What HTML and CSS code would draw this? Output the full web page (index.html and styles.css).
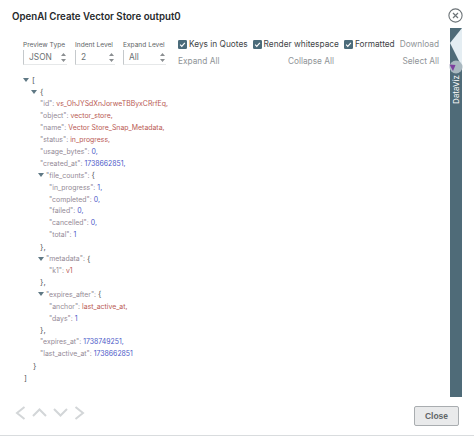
FILE: index.html
```html
<!DOCTYPE html>
<html lang="en">
<head>
  <meta charset="UTF-8">
  <title>OpenAI Create Vector Store output0</title>
  <link rel="stylesheet" href="styles.css">
</head>
<body>
  <div class="dialog">
    <h1 class="title">OpenAI Create Vector Store output0</h1>

    <div class="toolbar">
      <div class="selects">
        <div class="field type">
          <label>Preview Type</label>
          <div class="select"><span>JSON</span><svg width="5" height="11" viewBox="0 0 5 11"><path d="M2.5 1 L5 4 H0 Z M2.5 10 L0 7 H5 Z" fill="#8b8f92"/></svg></div>
        </div>
        <div class="field indent">
          <label>Indent Level</label>
          <div class="select"><span>2</span><svg width="5" height="11" viewBox="0 0 5 11"><path d="M2.5 1 L5 4 H0 Z M2.5 10 L0 7 H5 Z" fill="#8b8f92"/></svg></div>
        </div>
        <div class="field expand">
          <label>Expand Level</label>
          <div class="select"><span>All</span><svg width="5" height="11" viewBox="0 0 5 11"><path d="M2.5 1 L5 4 H0 Z M2.5 10 L0 7 H5 Z" fill="#8b8f92"/></svg></div>
        </div>
      </div>
      <div class="options">
        <div class="checks">
          <span class="check"><svg class="box" width="9" height="9" viewBox="0 0 10 10"><rect width="10" height="10" rx="1.5" fill="#4b6b7a"/><path d="M2.4 5.2 L4.2 7 L7.6 3.3" fill="none" stroke="#fff" stroke-width="1.3"/></svg>Keys in Quotes</span>
          <span class="check"><svg class="box" width="9" height="9" viewBox="0 0 10 10"><rect width="10" height="10" rx="1.5" fill="#4b6b7a"/><path d="M2.4 5.2 L4.2 7 L7.6 3.3" fill="none" stroke="#fff" stroke-width="1.3"/></svg>Render whitespace</span>
          <span class="check"><svg class="box" width="9" height="9" viewBox="0 0 10 10"><rect width="10" height="10" rx="1.5" fill="#4b6b7a"/><path d="M2.4 5.2 L4.2 7 L7.6 3.3" fill="none" stroke="#fff" stroke-width="1.3"/></svg>Formatted</span>
          <span class="link">Download</span>
        </div>
        <div class="actions">
          <span class="link">Expand All</span>
          <span class="link">Collapse All</span>
          <span class="link">Select All</span>
        </div>
      </div>
    </div>

    <div class="tree">
      <div class="row lvl0"><i class="arrow"></i><b>[</b></div>
      <div class="row lvl1"><i class="arrow"></i><b>{</b></div>
      <div class="row lvl2"><span class="key">"id":</span> <span class="str">vs_OhJYSdXnJorweTBByxCRrfEq,</span></div>
      <div class="row lvl2"><span class="key">"object":</span> <span class="str">vector_store,</span></div>
      <div class="row lvl2"><span class="key">"name":</span> <span class="str">Vector Store_Snap_Metadata,</span></div>
      <div class="row lvl2"><span class="key">"status":</span> <span class="str">in_progress,</span></div>
      <div class="row lvl2"><span class="key">"usage_bytes":</span> <span class="num">0,</span></div>
      <div class="row lvl2"><span class="key">"created_at":</span> <span class="num">1738662851,</span></div>
      <div class="row open"><i class="arrow"></i><span class="key">"file_counts":</span> <b>{</b></div>
      <div class="row lvl3"><span class="key">"in_progress":</span> <span class="num">1,</span></div>
      <div class="row lvl3"><span class="key">"completed":</span> <span class="num">0,</span></div>
      <div class="row lvl3"><span class="key">"failed":</span> <span class="num">0,</span></div>
      <div class="row lvl3"><span class="key">"cancelled":</span> <span class="num">0,</span></div>
      <div class="row lvl3"><span class="key">"total":</span> <span class="num">1</span></div>
      <div class="row lvl2"><b>},</b></div>
      <div class="row open"><i class="arrow"></i><span class="key">"metadata":</span> <b>{</b></div>
      <div class="row lvl3"><span class="key">"k1":</span> <span class="str">v1</span></div>
      <div class="row lvl2"><b>},</b></div>
      <div class="row open"><i class="arrow"></i><span class="key">"expires_after":</span> <b>{</b></div>
      <div class="row lvl3"><span class="key">"anchor":</span> <span class="str">last_active_at,</span></div>
      <div class="row lvl3"><span class="key">"days":</span> <span class="num">1</span></div>
      <div class="row lvl2"><b>},</b></div>
      <div class="row lvl2"><span class="key">"expires_at":</span> <span class="num">1738749251,</span></div>
      <div class="row lvl2"><span class="key">"last_active_at":</span> <span class="num">1738662851</span></div>
      <div class="row end1"><b>}</b></div>
      <div class="row end0"><b>]</b></div>
    </div>

    <div class="footer">
      <div class="pager">
        <svg width="11" height="14" viewBox="0 0 11 14"><path d="M9.5 1 L2 7 L9.5 13" fill="none" stroke="#d3d6d8" stroke-width="2"/></svg>
        <svg width="15" height="9" viewBox="0 0 15 9"><path d="M1 8 L7.5 1.5 L14 8" fill="none" stroke="#d3d6d8" stroke-width="2"/></svg>
        <svg width="15" height="9" viewBox="0 0 15 9"><path d="M1 1 L7.5 7.5 L14 1" fill="none" stroke="#d3d6d8" stroke-width="2"/></svg>
        <svg width="11" height="14" viewBox="0 0 11 14"><path d="M1.5 1 L9 7 L1.5 13" fill="none" stroke="#d3d6d8" stroke-width="2"/></svg>
      </div>
      <button class="close-btn">Close</button>
    </div>

    <svg class="close-x" width="15" height="15" viewBox="0 0 15 15"><circle cx="7.5" cy="7.5" r="6.6" fill="none" stroke="#6d7478" stroke-width="1.1"/><path d="M5 5 L10 10 M10 5 L5 10" stroke="#6d7478" stroke-width="1.2"/></svg>

    <div class="dataviz">
      <svg class="notch" width="12" height="42" viewBox="0 0 12 42"><path d="M12 0 L0 15 L12 39 Z" fill="#e4edf2"/></svg>
      <svg class="knob" width="14" height="14" viewBox="0 0 14 14"><circle cx="7" cy="7" r="6.5" fill="#a9b8c0"/><path d="M0.5 4.5 L6.5 5 L4 11 Z" fill="#7d3f9e"/></svg>
      <span class="dataviz-label">DataViz</span>
    </div>
  </div>
</body>
</html>
```
FILE: styles.css
```css
body {
  margin: 0;
  background: #fff;
  font-family: Inter, "Noto Sans", sans-serif;
  color: #3f4548;
}
.dialog {
  position: relative;
  width: 474px;
  height: 436px;
  box-sizing: border-box;
  padding: 10px 15px 0 12px;
  overflow: hidden;
  border-bottom: 1px solid #d9dcde;
}
.title {
  margin: 0;
  font-size: 9.7px;
  line-height: 13px;
  font-weight: 600;
  color: #26292b;
}
.toolbar {
  display: flex;
  margin-top: 18px;
  padding-left: 11px;
  gap: 12px;
}
.selects {
  display: flex;
  gap: 8px;
}
.type { width: 44px; }
.indent { width: 40px; }
.expand { width: 43px; }
.field label {
  display: block;
  font-size: 6.6px;
  line-height: 9px;
  white-space: nowrap;
  color: #5d6366;
}
.select {
  display: flex;
  justify-content: space-between;
  align-items: center;
  height: 14px;
  padding: 0 1px 0 5px;
  border-left: 1px solid #c5c9cc;
  border-bottom: 1px solid #e6e8e9;
  font-size: 8.4px;
  color: #6a7073;
}
.options {
  width: 261px;
  margin-top: -3px;
}
.checks {
  display: flex;
  align-items: center;
  justify-content: space-between;
  height: 12px;
  font-size: 8.3px;
}
.check {
  display: flex;
  align-items: center;
  gap: 2px;
  white-space: nowrap;
}
.link {
  color: #8f9497;
  font-size: 8.3px;
}
.actions {
  display: flex;
  justify-content: space-between;
  margin-top: 5px;
  line-height: 12px;
}
.tree {
  margin-top: 7px;
  font-size: 6.9px;
  color: #555b5e;
}
.row {
  display: flex;
  align-items: center;
  gap: 2px;
  height: 11.92px;
  white-space: pre;
}
.row b {
  font-weight: 400;
  font-size: 8px;
}
.lvl0 { padding-left: 11px; }
.lvl1 { padding-left: 19px; }
.lvl2 { padding-left: 28px; }
.lvl3 { padding-left: 37px; }
.open { padding-left: 26px; }
.end1 { padding-left: 21px; }
.end0 { padding-left: 12px; }
.lvl0 .arrow, .lvl1 .arrow { margin-right: 1px; }
.arrow {
  width: 0;
  height: 0;
  border-left: 3px solid transparent;
  border-right: 3px solid transparent;
  border-top: 4px solid #5f7884;
}
.key { color: #948a96; }
.str { color: #b95a54; }
.num { color: #4a58c8; }
.footer {
  display: flex;
  justify-content: space-between;
  align-items: flex-start;
  margin-top: 22px;
  padding-left: 3px;
}
.pager {
  display: flex;
  align-items: center;
  gap: 6px;
}
.close-btn {
  width: 45px;
  height: 20px;
  padding: 0;
  background: #e9eaeb;
  border: 1px solid #a9adb0;
  border-radius: 2px;
  font-family: "Liberation Sans", sans-serif;
  font-size: 8.5px;
  font-weight: 700;
  color: #5f6467;
}
.close-x {
  position: absolute;
  top: 8px;
  left: 448px;
}
.dataviz {
  position: absolute;
  top: 28px;
  left: 450px;
  width: 12px;
  height: 369px;
  background: #4f6b78;
}
.notch {
  position: absolute;
  top: 0;
  left: 0;
}
.knob {
  position: absolute;
  top: 32px;
  left: -1px;
}
.dataviz-label {
  position: absolute;
  top: 47px;
  left: 0;
  width: 12px;
  writing-mode: vertical-rl;
  transform: rotate(180deg);
  font-size: 8px;
  line-height: 12px;
  color: #fff;
}
```
